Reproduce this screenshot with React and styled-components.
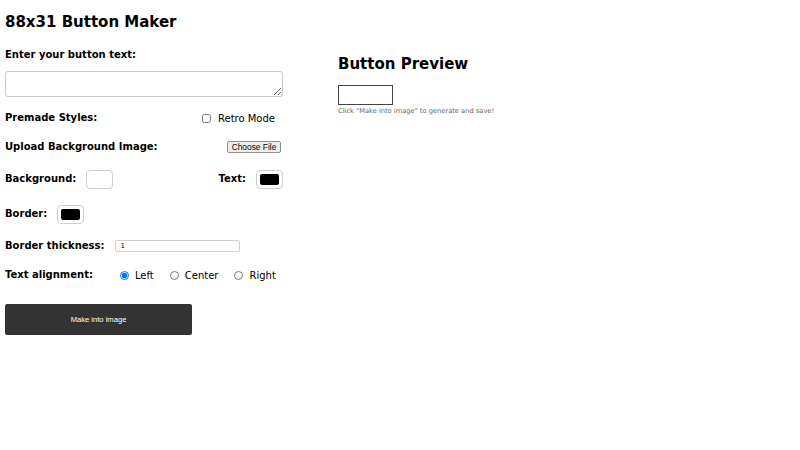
import React, { useState } from 'react';
import styled, { createGlobalStyle } from 'styled-components';

const GlobalStyle = createGlobalStyle`
  html, body {
    margin: 0;
    padding: 0;
    background: #ffffff;
    font-family: "DejaVu Sans", sans-serif;
    color: #000;
  }
`;

const Page = styled.div`
  display: flex;
  align-items: flex-start;
  gap: 55px;
  padding: 0 5px;
`;

const Editor = styled.div`
  display: flex;
  flex-direction: column;
  width: 278px;
`;

const Title = styled.h1`
  margin: 12px 0 0;
  font-size: 15px;
  line-height: 20px;
  font-weight: bold;
`;

const Label = styled.label`
  font-size: 10px;
  line-height: 14px;
  font-weight: bold;
  white-space: nowrap;
`;

const TopLabel = styled(Label)`
  display: block;
  margin-top: 16px;
`;

const TextArea = styled.textarea`
  box-sizing: border-box;
  width: 278px;
  height: 26px;
  margin: 9px 0 0;
  border: 1px solid #c8c8c8;
  border-radius: 3px;
  font-family: "DejaVu Sans", sans-serif;
  font-size: 10px;
  padding: 3px 5px;
`;

const Row = styled.div`
  display: flex;
  align-items: center;
  justify-content: ${({ $spread }) => ($spread ? 'space-between' : 'flex-start')};
  gap: 10px;
  height: 20px;
  margin-top: ${({ $mt }) => $mt}px;
  padding-right: ${({ $pr }) => $pr || 0}px;
`;

const Pair = styled.div`
  display: flex;
  align-items: center;
  gap: 10px;
`;

const CheckLabel = styled.label`
  display: flex;
  align-items: center;
  gap: 7px;
  font-size: 10px;
`;

const Check = styled.input`
  width: 9px;
  height: 9px;
  margin: 0;
`;

const FileButton = styled.button`
  box-sizing: border-box;
  width: 54px;
  height: 12px;
  padding: 0;
  margin-right: 2px;
  background: #efefef;
  border: 1px solid #8f8f8f;
  border-radius: 2px;
  font-family: "Liberation Sans", Arial, sans-serif;
  font-size: 8.4px;
  line-height: 10px;
  color: #000;
`;

const Swatch = styled.div`
  box-sizing: border-box;
  width: 27px;
  height: 19px;
  padding: 3px;
  border: 1px solid #cfcfcf;
  border-radius: 4px;
  background: #fff;

  &::after {
    content: '';
    display: block;
    height: 100%;
    border-radius: 2px;
    background: ${({ $color }) => $color};
  }
`;

const NumberInput = styled.input`
  box-sizing: border-box;
  width: 125px;
  height: 12px;
  padding: 0 5px;
  margin: 0;
  border: 1px solid #d0d0d0;
  border-radius: 2px;
  font-family: "DejaVu Sans", sans-serif;
  font-size: 7px;
  color: #000;
`;

const RadioGroup = styled.div`
  display: flex;
  align-items: center;
  gap: 16px;
  margin-left: 17px;
`;

const RadioLabel = styled.label`
  display: flex;
  align-items: center;
  gap: 6px;
  font-size: 10px;
`;

const Radio = styled.input`
  width: 9px;
  height: 9px;
  margin: 0;
`;

const MakeButton = styled.button`
  width: 187px;
  height: 31px;
  margin-top: 19px;
  background: #333333;
  border: none;
  border-radius: 2px;
  color: #ffffff;
  font-family: "Liberation Sans", Arial, sans-serif;
  font-size: 7.6px;
  padding: 0;
`;

const Preview = styled.div`
  display: flex;
  flex-direction: column;
`;

const PreviewTitle = styled.h2`
  margin: 54px 0 0;
  font-size: 15px;
  line-height: 20px;
  font-weight: bold;
`;

const PreviewBox = styled.div`
  box-sizing: border-box;
  width: 55px;
  height: 20px;
  margin-top: 11px;
  border: 1px solid #444;
  background: #fff;
`;

const Hint = styled.p`
  margin: 2px 0 0;
  font-size: 6.7px;
  line-height: 8px;
  color: #666;
`;

const alignments = ['Left', 'Center', 'Right'];

export default function App() {
  const [text, setText] = useState('');
  const [retro, setRetro] = useState(false);
  const [thickness, setThickness] = useState('1');
  const [align, setAlign] = useState('Left');

  return (
    <>
      <GlobalStyle />
      <Page>
        <Editor>
          <Title>88x31 Button Maker</Title>
          <TopLabel htmlFor="btnText">Enter your button text:</TopLabel>
          <TextArea id="btnText" value={text} onChange={(e) => setText(e.target.value)} />

          <Row $mt={11} $pr={8} $spread>
            <Label>Premade Styles:</Label>
            <CheckLabel>
              <Check type="checkbox" checked={retro} onChange={() => setRetro(!retro)} />
              Retro Mode
            </CheckLabel>
          </Row>

          <Row $mt={9} $spread>
            <Label>Upload Background Image:</Label>
            <FileButton type="button">Choose File</FileButton>
          </Row>

          <Row $mt={12} $spread>
            <Pair>
              <Label>Background:</Label>
              <Swatch $color="#ffffff" />
            </Pair>
            <Pair>
              <Label>Text:</Label>
              <Swatch $color="#000000" />
            </Pair>
          </Row>

          <Row $mt={15}>
            <Label>Border:</Label>
            <Swatch $color="#000000" />
          </Row>

          <Row $mt={12}>
            <Label>Border thickness:</Label>
            <NumberInput type="text" value={thickness} onChange={(e) => setThickness(e.target.value)} />
          </Row>

          <Row $mt={9}>
            <Label>Text alignment:</Label>
            <RadioGroup>
              {alignments.map((a) => (
                <RadioLabel key={a}>
                  <Radio
                    type="radio"
                    name="align"
                    checked={align === a}
                    onChange={() => setAlign(a)}
                  />
                  {a}
                </RadioLabel>
              ))}
            </RadioGroup>
          </Row>

          <MakeButton type="button">Make into image</MakeButton>
        </Editor>

        <Preview>
          <PreviewTitle>Button Preview</PreviewTitle>
          <PreviewBox />
          <Hint>Click "Make into image" to generate and save!</Hint>
        </Preview>
      </Page>
    </>
  );
}
